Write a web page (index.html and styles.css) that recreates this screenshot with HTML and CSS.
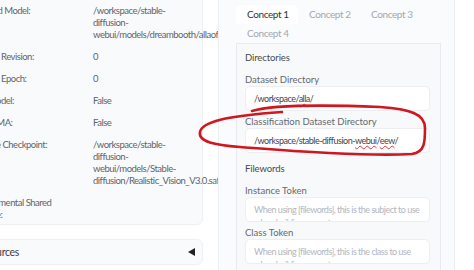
FILE: index.html
```html
<!DOCTYPE html>
<html lang="en">
<head>
    <meta charset="UTF-8">
    <title>Dreambooth</title>
    <link rel="stylesheet" href="styles.css">
</head>
<body>
    <div class="page">
        <div class="left">
            <div class="info">
                <div class="row"><span class="key">Loaded Model:</span><span class="val">/workspace/stable-<br>diffusion-<br>webui/models/dreambooth/allaofmodel</span></div>
                <div class="row"><span class="key">Model Revision:</span><span class="val">0</span></div>
                <div class="row"><span class="key">Model Epoch:</span><span class="val">0</span></div>
                <div class="row"><span class="key">V2 Model:</span><span class="val">False</span></div>
                <div class="row"><span class="key">Has EMA:</span><span class="val">False</span></div>
                <div class="row"><span class="key">Source Checkpoint:</span><span class="val">/workspace/stable-<br>diffusion-<br>webui/models/Stable-<br>diffusion/Realistic_Vision_V3.0.safetensors</span></div>
                <div class="row"><span class="key">Experimental Shared Source:</span><span class="val"></span></div>
            </div>
            <div class="accordion">
                <span>Resources</span>
                <svg class="caret" width="7" height="8" viewBox="0 0 7 8"><polygon points="7,0 7,8 0,4" fill="#222"/></svg>
            </div>
        </div>

        <div class="right">
            <div class="tabs">
                <span class="tab active">Concept 1</span>
                <span class="tab">Concept 2</span>
                <span class="tab">Concept 3</span>
                <span class="tab">Concept 4</span>
            </div>
            <div class="panel">
                <div class="section">Directories</div>
                <div class="field">
                    <div class="label">Dataset Directory</div>
                    <div class="input">/workspace/<span class="typo">alla</span>/</div>
                </div>
                <div class="field">
                    <div class="label">Classification Dataset Directory</div>
                    <div class="input">/workspace/stable-diffusion-<span class="typo">webui</span>/<span class="typo">eew</span>/</div>
                </div>
                <div class="section section-gap">Filewords</div>
                <div class="field">
                    <div class="label">Instance Token</div>
                    <div class="input area">When using [filewords], this is the subject to use when building prompts.</div>
                </div>
                <div class="field">
                    <div class="label">Class Token</div>
                    <div class="input area">When using [filewords], this is the class to use when building prompts.</div>
                </div>
            </div>
        </div>
    </div>

    <!-- hand drawn marker ring -->
    <svg class="annot" width="474" height="270" viewBox="0 0 474 270">
        <path d="M252 111 C272 105 330 105 380 107 C410 109 425 114 425 128 C425 142 425 152 412 154 C360 157 280 150 240 147 C215 145 198 142 200 132 C202 122 225 116 282 112"
              fill="none" stroke="#d0161f" stroke-width="2.6" stroke-linecap="round"/>
    </svg>
</body>
</html>
```

FILE: styles.css
```css
body {
    margin: 0;
    background: #fff;
    font-family: 'Lato', 'Noto Sans', sans-serif;
    overflow: hidden;
    position: relative;
    height: 270px;
}

.page {
    display: flex;
    height: 270px;
}

/* left info column */
.left {
    width: 258px;
    margin-left: -40px;
    flex-shrink: 0;
    overflow: hidden;
}

.info {
    width: 243px;
    box-sizing: border-box;
    margin-top: -10px;
    padding: 14px 0 3px 14px;
    background: #f9fafb;
    border: 1px solid #eef0f2;
    border-radius: 6px;
    display: flex;
    flex-direction: column;
    gap: 10px;
}

.row {
    display: flex;
    font-size: 9.5px;
    line-height: 12px;
    letter-spacing: -0.5px;
    color: #60646b;
}

.key {
    width: 118px;
    flex-shrink: 0;
    padding-right: 22px;
    box-sizing: border-box;
}

.val {
    white-space: nowrap;
}

.accordion {
    width: 243px;
    height: 26px;
    box-sizing: border-box;
    margin-top: 14px;
    padding: 0 7px 0 14px;
    display: flex;
    align-items: center;
    justify-content: space-between;
    background: #f9fafb;
    border: 1px solid #eef0f2;
    border-radius: 6px;
    font-size: 10.5px;
    letter-spacing: -0.3px;
    color: #3a3f47;
}

/* right concept column */
.right {
    width: 237px;
    flex-shrink: 0;
    box-sizing: border-box;
    padding: 5px 13px 0 17px;
    background: #fafbfc;
    border-left: 1px solid #eceef1;
    border-right: 1px solid #eceef1;
}

.tabs {
    display: flex;
    flex-wrap: wrap;
}

.tab {
    width: 62px;
    height: 19px;
    box-sizing: border-box;
    padding-left: 11px;
    font-size: 10px;
    letter-spacing: -0.4px;
    line-height: 19px;
    color: #a3a8b0;
}

.tab.active {
    background: #fff;
    color: #2f343b;
    border-radius: 5px 5px 0 0;
}

.panel {
    background: #f8f9fa;
    border: 1px solid #e8eaed;
    padding: 8px 10px 0 8px;
    height: 240px;
    box-sizing: border-box;
}

.section {
    font-size: 9.5px;
    line-height: 12px;
    letter-spacing: -0.1px;
    color: #454a52;
    margin-bottom: 10px;
}

.section-gap {
    margin-top: 10px;
}

.field {
    margin-bottom: 5px;
}

.label {
    font-size: 9.5px;
    line-height: 12px;
    color: #646870;
}

.input {
    height: 25px;
    box-sizing: border-box;
    padding: 0 8px;
    background: #fff;
    border: 1px solid #eceef1;
    border-radius: 5px;
    font-size: 9px;
    letter-spacing: -0.5px;
    line-height: 23px;
    color: #3f444b;
    white-space: nowrap;
    overflow: hidden;
}

.input.area {
    white-space: normal;
    line-height: 13px;
    padding-top: 5px;
    color: #b2b6bd;
}

.typo {
    text-decoration: underline wavy #d23a3a;
    text-decoration-thickness: 1px;
}

.annot {
    position: absolute;
    left: 0;
    top: 0;
    pointer-events: none;
}
```
